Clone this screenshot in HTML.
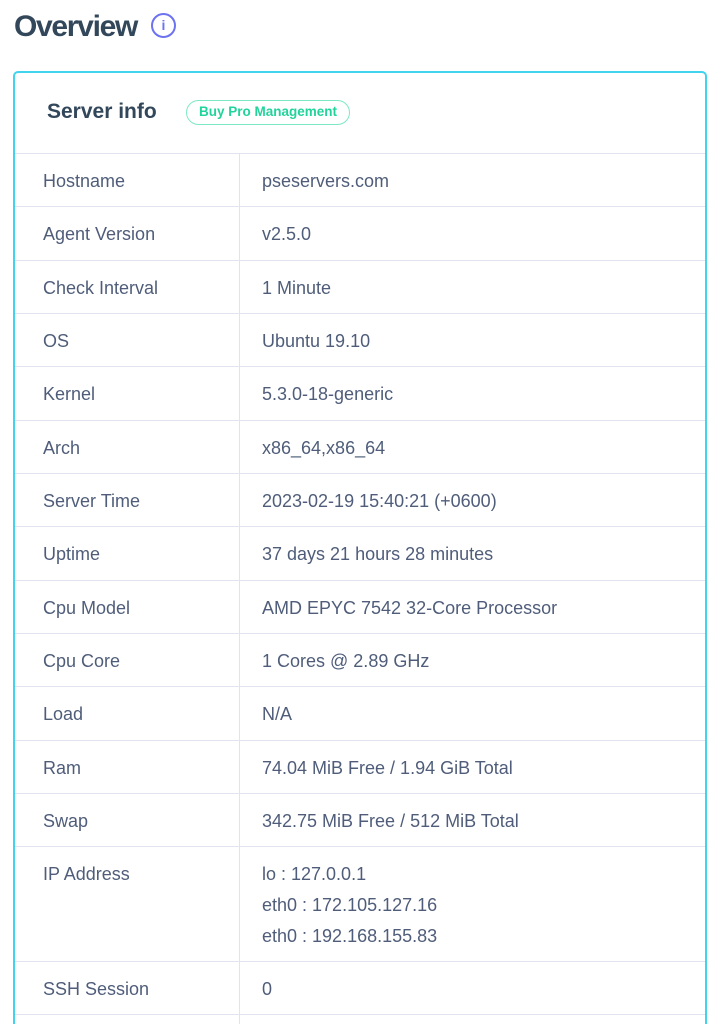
<!DOCTYPE html>
<html style="height:1024px;overflow:hidden"><head><style>
body{margin:0;background:#fff;font-family:"Liberation Sans",sans-serif;width:723px;height:1024px;overflow:hidden;position:relative}
h1{position:absolute;left:14px;top:10px;margin:0;font-size:30px;font-weight:bold;color:#33475b;letter-spacing:-1.3px}
.info{position:absolute;left:151px;top:13px;width:25px;height:25px;border:2px solid #6c72f0;border-radius:50%;box-sizing:border-box;color:#6c72f0;font-size:14px;font-weight:bold;text-align:center;line-height:21px}
.card{position:absolute;left:13px;top:71px;width:694px;height:1000px;border:2px solid #40d4ef;border-radius:5px;box-sizing:border-box}
.hd{position:absolute;left:47px;top:100px;font-size:21px;font-weight:bold;color:#33475b}
.badge{position:absolute;left:186px;top:100px;width:164px;height:25px;border:1.5px solid #7ee8c4;border-radius:13px;box-sizing:border-box;color:#22d39b;font-size:13.5px;font-weight:bold;text-align:center;line-height:22px}
.row{position:absolute;left:15px;width:690px;border-top:1px solid #e1e3ef}
.row .k{position:absolute;left:28px;top:17px;font-size:18px;color:#4f5d7a}
.row .v{position:absolute;left:247px;top:16px;font-size:18px;color:#4f5d7a;line-height:31px;margin-top:-4px}
.vl{position:absolute;left:239px;top:153px;width:1px;height:880px;background:#e1e3ef}
</style></head><body>
<h1>Overview</h1><div class="info">i</div>
<div class="card"></div>
<div class="hd">Server info</div><div class="badge">Buy Pro Management</div>
<div class="vl"></div>
<div class="row" style="top:153px"><span class="k">Hostname</span><span class="v">pseservers.com</span></div>
<div class="row" style="top:206.3px"><span class="k">Agent Version</span><span class="v">v2.5.0</span></div>
<div class="row" style="top:259.7px"><span class="k">Check Interval</span><span class="v">1 Minute</span></div>
<div class="row" style="top:313px"><span class="k">OS</span><span class="v">Ubuntu 19.10</span></div>
<div class="row" style="top:366.3px"><span class="k">Kernel</span><span class="v">5.3.0-18-generic</span></div>
<div class="row" style="top:419.7px"><span class="k">Arch</span><span class="v">x86_64,x86_64</span></div>
<div class="row" style="top:473px"><span class="k">Server Time</span><span class="v">2023-02-19 15:40:21 (+0600)</span></div>
<div class="row" style="top:526.3px"><span class="k">Uptime</span><span class="v">37 days 21 hours 28 minutes</span></div>
<div class="row" style="top:579.7px"><span class="k">Cpu Model</span><span class="v">AMD EPYC 7542 32-Core Processor</span></div>
<div class="row" style="top:633px"><span class="k">Cpu Core</span><span class="v">1 Cores @ 2.89 GHz</span></div>
<div class="row" style="top:686.3px"><span class="k">Load</span><span class="v">N/A</span></div>
<div class="row" style="top:739.7px"><span class="k">Ram</span><span class="v">74.04 MiB Free / 1.94 GiB Total</span></div>
<div class="row" style="top:793px"><span class="k">Swap</span><span class="v">342.75 MiB Free / 512 MiB Total</span></div>
<div class="row" style="top:846.3px"><span class="k">IP Address</span><span class="v">lo : 127.0.0.1<br>eth0 : 172.105.127.16<br>eth0 : 192.168.155.83</span></div>
<div class="row" style="top:961px"><span class="k">SSH Session</span><span class="v">0</span></div>
<div class="row" style="top:1014px"></div>
</body></html>
